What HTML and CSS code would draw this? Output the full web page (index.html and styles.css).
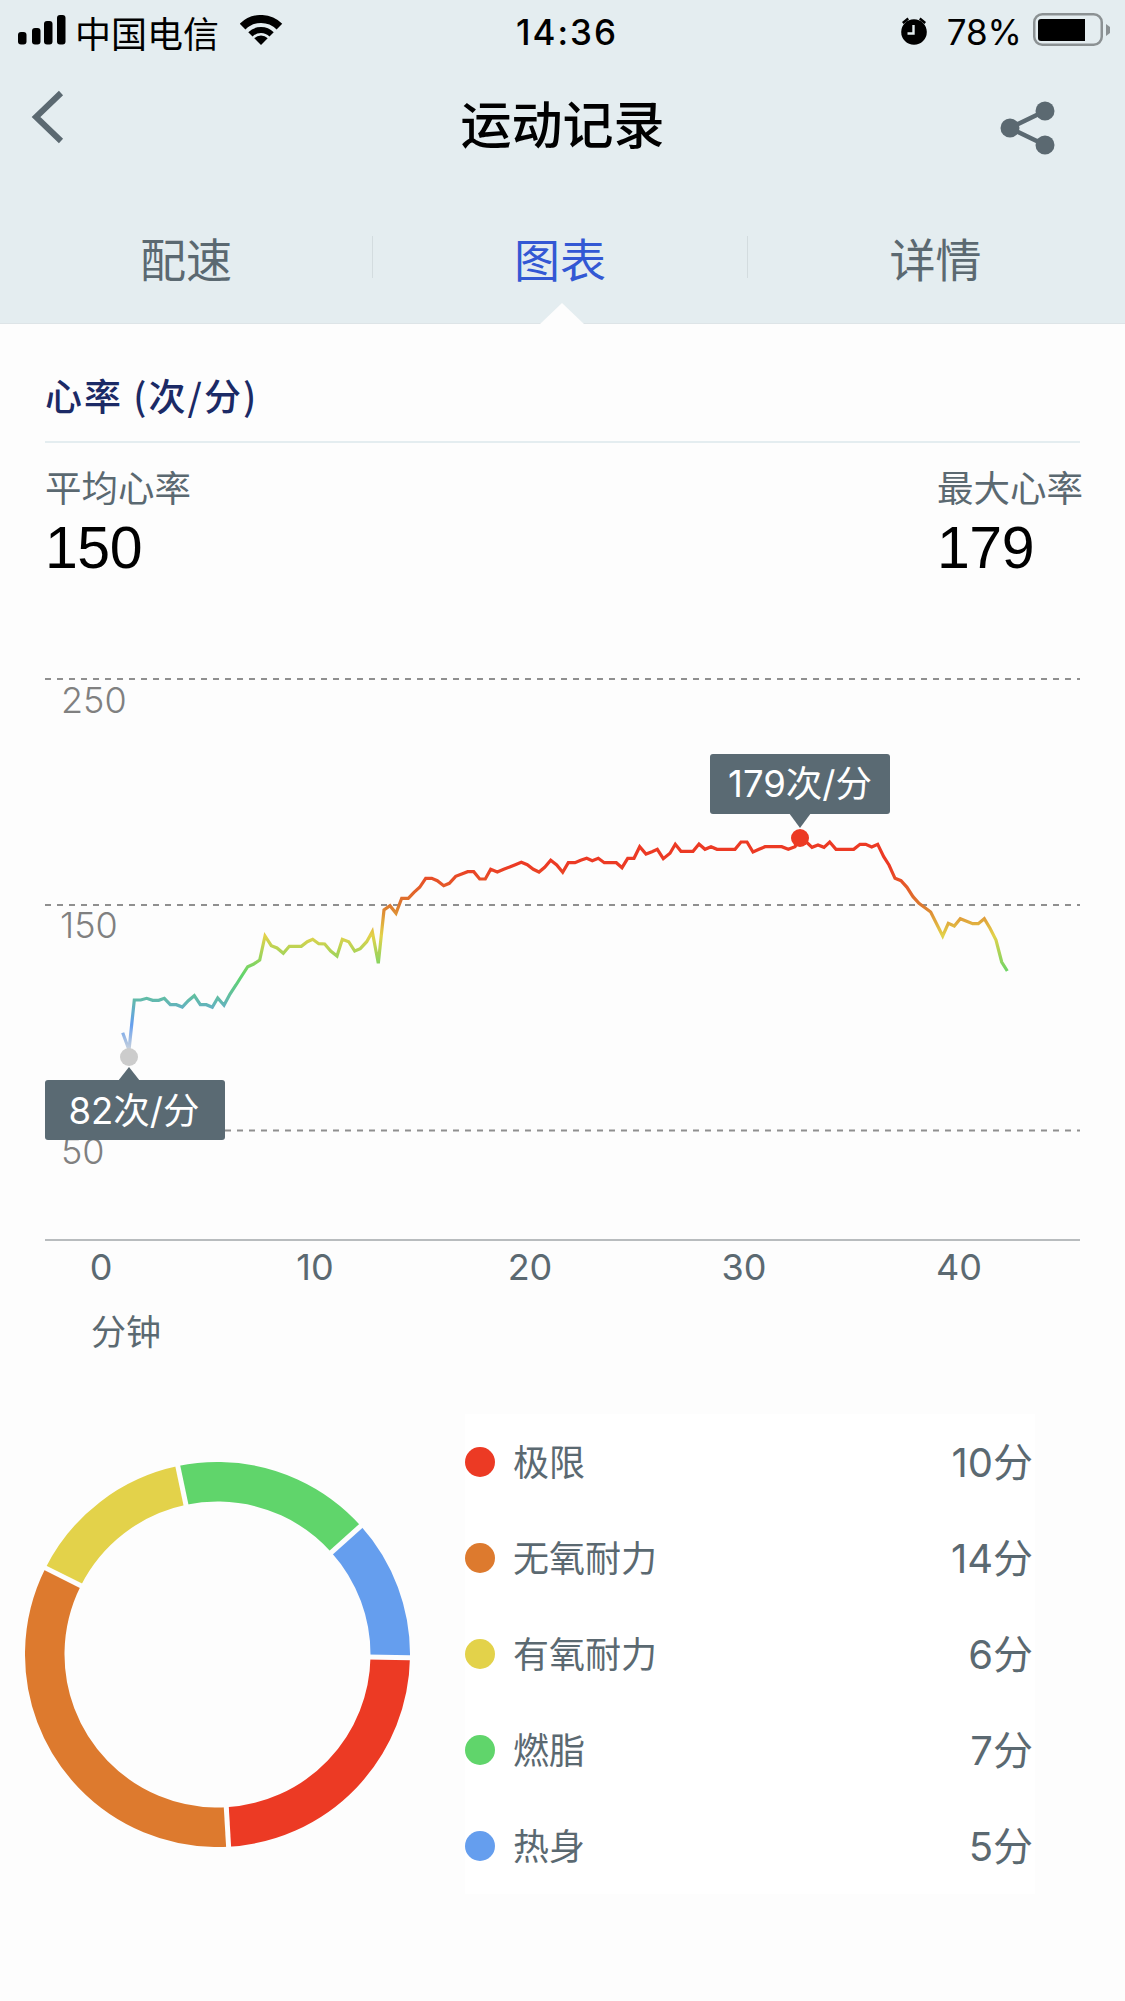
FILE: index.html
```html
<!DOCTYPE html>
<html lang="zh">
<head>
<meta charset="utf-8">
<title>运动记录</title>
<link rel="stylesheet" href="styles.css">
</head>
<body>
<div class="page">
  <header class="header">
    <div class="status">
      <div class="status-left">
        <svg class="signal" width="48" height="30" viewBox="0 0 48 30">
          <rect x="0" y="17" width="8.5" height="12.5" rx="3"/>
          <rect x="14" y="13" width="8.5" height="16.5" rx="3"/>
          <rect x="26" y="6" width="8.5" height="23.5" rx="3"/>
          <rect x="39" y="0" width="8.5" height="29.5" rx="3"/>
        </svg>
        <span class="carrier">中国电信</span>
        <svg class="wifi" width="44" height="32" viewBox="0 0 44 32">
          <path d="M21 30 L14.3 23.3 A9.5 9.5 0 0 1 27.7 23.3 Z" fill="#000"/>
          <path d="M10.4 19.4 A15 15 0 0 1 31.6 19.4" fill="none" stroke="#000" stroke-width="6"/>
          <path d="M2.6 11.6 A26 26 0 0 1 39.4 11.6" fill="none" stroke="#000" stroke-width="8"/>
        </svg>
      </div>
      <div class="time">14:36</div>
      <div class="status-right">
        <svg class="alarm" width="30" height="32" viewBox="0 0 30 32">
          <circle cx="15" cy="16" r="12.8" fill="#000"/>
          <path d="M3 6 L8.5 1.5 L10 3.5 L4.5 8 Z M27 6 L21.5 1.5 L20 3.5 L25.5 8 Z" fill="#000"/>
          <path d="M14.5 9 V17.5 H8.5" stroke="#e4edf0" stroke-width="2.4" fill="none"/>
        </svg>
        <span class="battery-pct">78%</span>
        <svg class="battery" width="78" height="36" viewBox="0 0 78 36">
          <rect x="2.25" y="2.25" width="67.5" height="30.5" rx="8" fill="none" stroke="#8b9193" stroke-width="2.5"/>
          <path d="M9 7 H53 V29 H9 A3 3 0 0 1 6 26 V10 A3 3 0 0 1 9 7 Z" fill="#000"/>
          <path d="M74 12 L78 15 V21 L74 24 Z" fill="#8b9193"/>
        </svg>
      </div>
    </div>
    <nav class="nav">
      <svg class="back" width="34" height="54" viewBox="0 0 34 54">
        <path d="M30 3 L5 27 L30 51" fill="none" stroke="#5b6971" stroke-width="6"/>
      </svg>
      <h1 class="title">运动记录</h1>
      <svg class="share" width="60" height="60" viewBox="0 0 60 60">
        <path d="M46 11 L11 28 L46 45" fill="none" stroke="#5b6971" stroke-width="4.5"/>
        <circle cx="46" cy="11" r="9.5" fill="#5b6971"/>
        <circle cx="11" cy="28" r="9.5" fill="#5b6971"/>
        <circle cx="46" cy="45" r="9.5" fill="#5b6971"/>
      </svg>
    </nav>
    <div class="tabs">
      <div class="tab">配速</div>
      <div class="tab tab-active">图表</div>
      <div class="tab">详情</div>
    </div>
  </header>

  <main class="main">
    <section class="hr-head">
      <h2 class="section-title">心率 (次/分)</h2>
      <div class="stats">
        <div class="stat">
          <div class="stat-label">平均心率</div>
          <div class="stat-value">150</div>
        </div>
        <div class="stat">
          <div class="stat-label">最大心率</div>
          <div class="stat-value">179</div>
        </div>
      </div>
    </section>

    <svg class="chart" width="1125" height="720" viewBox="0 640 1125 720">
      <defs>
        <linearGradient id="hr" gradientUnits="userSpaceOnUse" x1="0" y1="838" x2="0" y2="1050">
          <stop offset="0.13" stop-color="#ec3a24"/>
          <stop offset="0.32" stop-color="#dd7a2e"/>
          <stop offset="0.46" stop-color="#e3d24a"/>
          <stop offset="0.65" stop-color="#5fd56b"/>
          <stop offset="0.88" stop-color="#659eee"/>
          <stop offset="1" stop-color="#ccd3dc"/>
        </linearGradient>
      </defs>
      <line class="grid" x1="45" y1="679" x2="1080" y2="679"/>
      <line class="grid" x1="45" y1="905" x2="1080" y2="905"/>
      <line class="grid" x1="45" y1="1130.5" x2="1080" y2="1130.5"/>
      <line class="axis" x1="45" y1="1240" x2="1080" y2="1240"/>

      <text class="ylabel" x="61" y="713">250</text>
      <text class="ylabel" x="60" y="938">150</text>
      <text class="ylabel" x="61" y="1164">50</text>

      <polyline class="hr-line" points="122.7,1032.7 129,1050 134.3,1000 140.7,1000 146.7,998.3 152.7,1000.3 158.7,1000.3 164.3,998.3 170.3,1004.7 176.3,1004.7 182.3,1007 188.3,1000.7 194.3,995.7 200.3,1004.7 206.3,1004.7 212.3,1007.3 217.7,998 224,1005.3 230,994 236,985 241.7,976 247.7,966.7 253.3,964.3 259.7,960 265,936 271.3,945.7 277,948 283.3,953.3 289.3,946.3 301.3,946.3 307.3,941.7 312.7,939.3 318.7,943.7 324.7,944 330.7,951 337,956 342.3,939.3 348.7,941.7 354.7,951 360.3,948.7 366.7,941.7 372.3,931.7 378.3,963.3 384,910 390,905.7 396,913.3 401.7,898.3 408.3,898.3 414,892.3 419.7,887.3 425.7,878.3 431.7,878.3 437.3,880.7 443.7,885.7 449.3,883.3 455.7,876.3 461.7,874 467.7,871.7 473.7,871.7 479.7,879 485.3,879 490.7,869.3 497.3,872 503.7,869.3 509.7,867 515.3,864.7 521.3,862.3 527.3,864.7 533.3,869.3 539,872 544.7,867.3 550.7,860.3 556.7,865 562.7,872.3 568.3,862.7 575,862.7 580.7,860.3 586.7,858.3 592.3,860.7 598.3,858.3 604.3,862.7 616.3,862.7 622,867.7 627.7,858.3 634,858.3 639.7,846.7 646,854 652,851.7 657.3,849.3 663.3,858.7 670,853.3 675.3,844.3 681,851.3 693,851.3 699,844 705,849.3 711,846.7 717,849.3 735,849.3 741,842 747,842 753,852 759,849.3 765,846.7 781.7,846.7 788.3,849.3 795,846.7 800,838 806.7,842.3 812,847.3 818,845 824,847.3 829.7,842 836,849.3 853.7,849.3 860,844.3 865.7,844.3 871.7,847 877.7,844.3 883.7,856.7 889,865 895,878.3 901,880.7 907,887.3 913,896.7 919,903.3 925,907.7 930.7,912 942.7,936 948.3,923.3 954.3,926 960.3,918.7 972.7,923.7 978.3,923.7 984.3,918.7 990,928.3 996,940 1001.7,962 1007.3,971"/>

      <circle class="dot-min" cx="129" cy="1057" r="9"/>
      <path class="tip" d="M118 1081 L129 1067 L140 1081 Z"/>
      <rect class="tip" x="45" y="1080" width="180" height="60" rx="3"/>
      <text class="tip-text" x="134" y="1124" text-anchor="middle">82次/分</text>

      <circle class="dot-max" cx="800" cy="838" r="9"/>
      <path class="tip" d="M789 813 L800 828 L811 813 Z"/>
      <rect class="tip" x="710" y="754" width="180" height="60" rx="3"/>
      <text class="tip-text" x="800" y="797" text-anchor="middle">179次/分</text>

      <text class="xlabel" x="101" y="1280" text-anchor="middle">0</text>
      <text class="xlabel" x="315" y="1280" text-anchor="middle">10</text>
      <text class="xlabel" x="530" y="1280" text-anchor="middle">20</text>
      <text class="xlabel" x="744" y="1280" text-anchor="middle">30</text>
      <text class="xlabel" x="959" y="1280" text-anchor="middle">40</text>
      <text class="xunit" x="91" y="1345">分钟</text>
    </svg>

    <section class="zones">
      <svg class="donut" width="385" height="385" viewBox="-192.5 -192.5 385 385">
        <g transform="rotate(1)">
          <circle class="seg seg-red" r="172.75" pathLength="42" stroke-dasharray="10 32" stroke-dashoffset="0"/>
          <circle class="seg seg-orange" r="172.75" pathLength="42" stroke-dasharray="14 28" stroke-dashoffset="-10"/>
          <circle class="seg seg-yellow" r="172.75" pathLength="42" stroke-dasharray="6 36" stroke-dashoffset="-24"/>
          <circle class="seg seg-green" r="172.75" pathLength="42" stroke-dasharray="7 35" stroke-dashoffset="-30"/>
          <circle class="seg seg-blue" r="172.75" pathLength="42" stroke-dasharray="5 37" stroke-dashoffset="-37"/>
          <line class="gap" x1="150" y1="0" x2="195" y2="0"/>
          <line class="gap" x1="150" y1="0" x2="195" y2="0" transform="rotate(85.7)"/>
          <line class="gap" x1="150" y1="0" x2="195" y2="0" transform="rotate(205.7)"/>
          <line class="gap" x1="150" y1="0" x2="195" y2="0" transform="rotate(257.1)"/>
          <line class="gap" x1="150" y1="0" x2="195" y2="0" transform="rotate(317.1)"/>
        </g>
      </svg>
      <ul class="legend">
        <li class="legend-row"><i class="swatch swatch-red"></i><span class="legend-name">极限</span><span class="legend-value">10分</span></li>
        <li class="legend-row"><i class="swatch swatch-orange"></i><span class="legend-name">无氧耐力</span><span class="legend-value">14分</span></li>
        <li class="legend-row"><i class="swatch swatch-yellow"></i><span class="legend-name">有氧耐力</span><span class="legend-value">6分</span></li>
        <li class="legend-row"><i class="swatch swatch-green"></i><span class="legend-name">燃脂</span><span class="legend-value">7分</span></li>
        <li class="legend-row"><i class="swatch swatch-blue"></i><span class="legend-name">热身</span><span class="legend-value">5分</span></li>
      </ul>
    </section>
  </main>
</div>
</body>
</html>
```
FILE: styles.css
```css
* { box-sizing: border-box; }
html, body { margin: 0; padding: 0; }
body {
  width: 1125px;
  height: 2001px;
  overflow: hidden;
  background: #fdfdfd;
  font-family: "Liberation Sans", "Noto Sans CJK SC", sans-serif;
  color: #5b6971;
}
.page { width: 1125px; height: 2001px; }

.header {
  height: 324px;
  background: #e4edf0;
  border-bottom: 1px solid #dde4e7;
  position: relative;
}
.header::after {
  content: "";
  position: absolute;
  left: 540px;
  bottom: -1px;
  border-left: 22px solid transparent;
  border-right: 22px solid transparent;
  border-bottom: 21px solid #fdfdfd;
}

.status {
  height: 64px;
  display: flex;
  align-items: center;
  justify-content: space-between;
  position: relative;
  color: #000;
  font-size: 36px;
}
.status-left { display: flex; align-items: center; padding-left: 18px; }
.signal { fill: #000; display: block; margin-bottom: 4px; }
.carrier { margin-left: 9px; font-family: "Noto Sans CJK SC", sans-serif; font-size: 36px; line-height: 64px; }
.wifi { margin-left: 21px; margin-bottom: 2px; display: block; }
.time {
  position: absolute;
  left: 507px;
  width: 120px;
  text-align: center;
  font-family: "Inter", sans-serif;
  font-weight: 500;
  font-size: 35px;
  letter-spacing: 2px;
}
.status-right { display: flex; align-items: center; padding-right: 15px; }
.alarm { display: block; margin-right: 18px; }
.battery-pct { font-family: "Inter", sans-serif; font-weight: 400; font-size: 35px; margin-right: 10px; }
.battery { display: block; margin-bottom: 4px; }

.nav {
  height: 125px;
  position: relative;
  display: flex;
  align-items: center;
  justify-content: center;
}
.back { position: absolute; left: 31px; top: 26px; display: block; }
.share { position: absolute; left: 999px; top: 36px; display: block; }
.title {
  margin: 0 0 10px;
  font-family: "Noto Sans CJK SC", sans-serif;
  font-size: 51px;
  font-weight: 500;
  color: #000;
  line-height: 70px;
}

.tabs {
  display: flex;
  align-items: center;
  height: 42px;
  margin-top: 47px;
}
.tab {
  flex: 0 0 375px;
  height: 42px;
  line-height: 42px;
  text-align: center;
  font-family: "Noto Sans CJK SC", sans-serif;
  font-size: 46px;
  color: #5b6971;
  border-right: 1px solid #d3dcdf;
}
.tab:first-child { flex-basis: 373px; }
.tab:last-child { border-right: 0; flex-basis: 375px; }
.tab-active { color: #3358d4; }

.main { padding: 0; }
.hr-head { padding: 0 45px; height: 316px; }
.section-title {
  margin: 0;
  height: 119px;
  border-bottom: 2px solid #e4edf0;
  padding-top: 44px;
  font-family: "Noto Sans CJK SC", sans-serif;
  font-size: 37px;
  font-weight: 500;
  line-height: 54px;
  letter-spacing: 2px;
  color: #1b2a66;
}
.stats { display: flex; justify-content: space-between; padding-top: 22px; margin-right: -3px; }
.stat-label { font-family: "Noto Sans CJK SC", sans-serif; font-size: 36.5px; line-height: 44px; color: #5b6971; }
.stat-value { font-size: 59px; line-height: 70px; margin-top: 4px; letter-spacing: -0.5px; color: #000; }

.chart { display: block; }
.grid { stroke: #8f8f8f; stroke-width: 2; stroke-dasharray: 6 6; }
.axis { stroke: #b8bcbe; stroke-width: 2; }
.ylabel { font-family: "Inter", sans-serif; font-weight: 300; font-size: 36px; fill: #808080; }
.hr-line { fill: none; stroke: url(#hr); stroke-width: 3.2; stroke-linejoin: miter; }
.dot-min { fill: #cccccc; }
.dot-max { fill: #ec3a24; }
.tip { fill: #5a6a73; }
.tip-text { font-family: "Inter", "Noto Sans CJK SC", sans-serif; font-size: 36.5px; fill: #fff; }
.xlabel { font-family: "Inter", sans-serif; font-size: 36px; fill: #5b6971; }
.xunit { font-family: "Noto Sans CJK SC", sans-serif; font-size: 35px; fill: #5b6971; }

.zones {
  display: flex;
  align-items: flex-start;
  padding-left: 25px;
  padding-top: 54px;
}
.donut { display: block; margin-top: 48px; flex: none; }
.seg { fill: none; stroke-width: 39.5; }
.seg-red { stroke: #ec3a24; }
.seg-orange { stroke: #dd7a2e; }
.seg-yellow { stroke: #e3d24a; }
.seg-green { stroke: #60d56b; }
.seg-blue { stroke: #659eee; }
.gap { stroke: #fdfdfd; stroke-width: 5; }

.legend {
  list-style: none;
  margin: 0 0 0 55px;
  padding: 0;
  width: 570px;
  background: #fff;
}
.legend-row {
  height: 96px;
  display: flex;
  align-items: center;
}
.swatch { width: 30px; height: 30px; border-radius: 50%; flex: none; }
.swatch-red { background: #ec3a24; }
.swatch-orange { background: #dd7a2e; }
.swatch-yellow { background: #e3d24a; }
.swatch-green { background: #60d56b; }
.swatch-blue { background: #659eee; }
.legend-name { margin: -4px 0 0 18px; font-family: "Noto Sans CJK SC", sans-serif; font-size: 36px; color: #5b6971; }
.legend-value { margin: -4px 2px 0 auto; font-family: "Inter", "Noto Sans CJK SC", sans-serif; font-size: 40px; color: #5b6971; }
```
